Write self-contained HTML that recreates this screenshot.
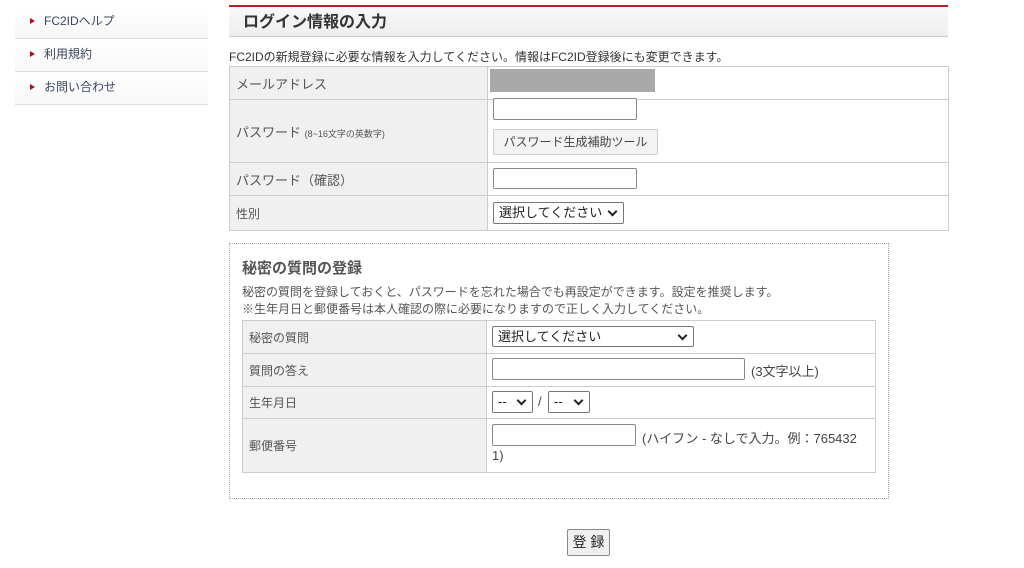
<!DOCTYPE html>
<html><head><meta charset="utf-8"><style>
*{margin:0;padding:0;box-sizing:border-box}
body{width:1024px;height:568px;background:#fff;font-family:"Liberation Sans","Noto Sans CJK JP",sans-serif;color:#444;position:relative;overflow:hidden;font-size:12px}
.a{position:absolute}
.side{left:15px;top:6px;width:193px}
.side div{height:33px;border-bottom:1px solid #ddd;background:linear-gradient(#fff,#f7f7f7);line-height:31px;padding-left:29px;position:relative;color:#3a4560;font-size:12px}
.side div:before{content:"";position:absolute;left:15px;top:12px;border-left:5px solid #b01020;border-top:3.5px solid transparent;border-bottom:3.5px solid transparent}
.hd{left:229px;top:5px;width:719px;height:32px;border-top:2px solid #b3202a;border-bottom:1px solid #ccc;background:linear-gradient(#f8f8f8,#eee);font-weight:bold;font-size:16px;color:#333;padding-left:14px;line-height:31px}
table{border-collapse:collapse;position:absolute}
td{border:1px solid #ccc;font-size:12px;color:#555;vertical-align:middle}
td.l{background:#f0f0f0;padding-left:6px}
.in{position:absolute;border:1px solid #888;border-radius:2px;background:#fff}
.sel{position:absolute;border:1px solid #777;border-radius:2px;background:#fff;font-size:13px;color:#222;padding-left:5px;line-height:19px}
.sel:after{content:"";position:absolute;right:7px;top:5px;width:5px;height:5px;border-right:2px solid #222;border-bottom:2px solid #222;transform:rotate(45deg)}
</style></head><body>
<div class="a side"><div>FC2IDヘルプ</div><div>利用規約</div><div>お問い合わせ</div></div>
<div class="a hd">ログイン情報の入力</div>
<div class="a" style="left:229px;top:48px;font-size:12px;color:#333">FC2IDの新規登録に必要な情報を入力してください。情報はFC2ID登録後にも変更できます。</div>
<table style="left:229px;top:66px;width:720px">
<tr style="height:33px"><td class="l" style="width:258px;font-size:13px">メールアドレス</td><td></td></tr>
<tr style="height:63px"><td class="l" style="font-size:13px">パスワード <span style="font-size:9px">(8~16文字の英数字)</span></td><td></td></tr>
<tr style="height:33px"><td class="l" style="font-size:13px">パスワード（確認）</td><td></td></tr>
<tr style="height:35px"><td class="l">性別</td><td></td></tr>
</table>
<div class="a" style="left:490px;top:69px;width:165px;height:23px;background:#a9a9a9"></div>
<div class="in" style="left:493px;top:98px;width:144px;height:22px"></div>
<div class="a" style="left:493px;top:129px;width:165px;height:26px;border:1px solid #ccc;border-radius:2px;background:#f3f3f3;font-size:12px;text-align:center;line-height:24px;color:#444">パスワード生成補助ツール</div>
<div class="in" style="left:493px;top:168px;width:144px;height:21px"></div>
<div class="sel" style="left:493px;top:202px;width:131px;height:22px">選択してください</div>
<div class="a" style="left:229px;top:243px;width:660px;height:256px;border:1px dotted #aaa"></div>
<div class="a" style="left:242px;top:257px;font-size:15px;font-weight:bold;color:#555">秘密の質問の登録</div>
<div class="a" style="left:242px;top:284px;font-size:12px;color:#555;line-height:17px">秘密の質問を登録しておくと、パスワードを忘れた場合でも再設定ができます。設定を推奨します。<br>※生年月日と郵便番号は本人確認の際に必要になりますので正しく入力してください。</div>
<table style="left:242px;top:320px;width:634px">
<tr style="height:33px"><td class="l" style="width:244px">秘密の質問</td><td></td></tr>
<tr style="height:33px"><td class="l">質問の答え</td><td></td></tr>
<tr style="height:32px"><td class="l">生年月日</td><td></td></tr>
<tr style="height:54px"><td class="l">郵便番号</td><td></td></tr>
</table>
<div class="sel" style="left:492px;top:326px;width:202px;height:21px">選択してください</div>
<div class="in" style="left:492px;top:358px;width:253px;height:22px"></div>
<div class="a" style="left:751px;top:361px;font-size:13px;color:#444">(3文字以上)</div>
<div class="sel" style="left:492px;top:391px;width:41px;height:22px">--</div>
<div class="a" style="left:538px;top:394px;font-size:13px">/</div>
<div class="sel" style="left:548px;top:391px;width:42px;height:22px">--</div>
<div class="in" style="left:492px;top:424px;width:144px;height:22px"></div>
<div class="a" style="left:642px;top:428px;font-size:13px;color:#444">(ハイフン - なしで入力。例：765432</div>
<div class="a" style="left:492px;top:448px;font-size:13px;color:#444">1)</div>
<div class="a" style="left:567px;top:529px;width:43px;height:27px;border:1px solid #888;border-radius:2px;background:#f0f0f0;text-align:center;line-height:25px;font-size:14px;color:#222">登 録</div>
</body></html>
